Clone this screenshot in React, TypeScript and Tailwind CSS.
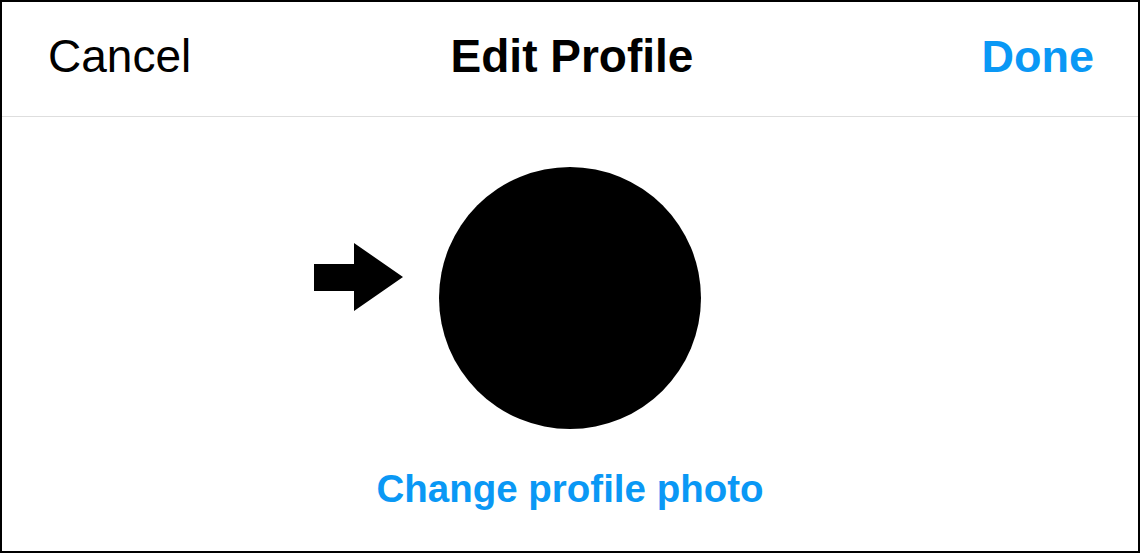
import React from 'react';

const font = { fontFamily: '"Liberation Sans", Arial, sans-serif' };

function Arrow(): JSX.Element {
    return (
        <svg width="90" height="70" viewBox="0 0 90 70" className="shrink-0">
            <polygon points="0,21 40,21 40,0 89,34 40,68 40,48 0,48" fill="#000" />
        </svg>
    );
}

export default function App(): JSX.Element {
    return (
        <div
            className="w-[1140px] h-[553px] bg-white border-2 border-black flex flex-col overflow-hidden"
            style={font}
        >
            <header className="h-[115px] shrink-0 grid grid-cols-[1fr_auto_1fr] items-center pl-[46px] pr-[44px] border-b border-[#dedede] pb-[6px]">
                <div>
                    <button className="text-[46px] text-black leading-none">Cancel</button>
                </div>
                <h1 className="text-[46px] font-bold text-black leading-none pl-[2px]">Edit Profile</h1>
                <div className="flex justify-end">
                    <button className="text-[45px] font-bold text-[#0a98f5] leading-none">Done</button>
                </div>
            </header>

            <main className="flex-1 flex flex-col items-center">
                <div className="flex items-center mt-[50px]">
                    <div className="mr-[35px] mt-[-40px]">
                        <Arrow />
                    </div>
                    <div className="w-[262px] h-[262px] rounded-full bg-black" />
                    <div className="w-[126px]" />
                </div>
                <button className="mt-[41px] text-[38.5px] font-bold text-[#0a98f5] leading-none">
                    Change profile photo
                </button>
            </main>
        </div>
    );
}
